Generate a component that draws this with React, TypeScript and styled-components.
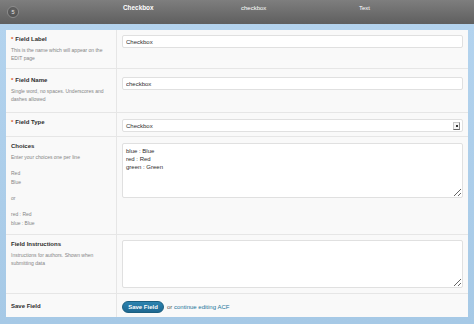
import React from "react";
import styled, { createGlobalStyle } from "styled-components";

const Global = createGlobalStyle`
  html, body { margin: 0; padding: 0; }
  body {
    width: 474px;
    height: 324px;
    overflow: hidden;
    font-family: "Liberation Sans", Arial, sans-serif;
    background: #a9cce8;
  }
  * { box-sizing: border-box; }
`;

const Page = styled.div`
  display: flex;
  flex-direction: column;
  width: 474px;
  height: 324px;
`;

const Header = styled.div`
  height: 24px;
  display: grid;
  grid-template-columns: 123px 118px 118px 1fr;
  align-items: start;
  background: linear-gradient(#7e7e7e, #686868 70%, #5f5f5f);
  color: #fff;
  font-size: 6.2px;
`;

const BadgeCell = styled.div`
  height: 24px;
  display: flex;
  align-items: center;
  padding-left: 7px;
`;

const Badge = styled.div`
  width: 12px;
  height: 12px;
  border-radius: 50%;
  background: radial-gradient(circle at 50% 40%, #6a6a6a, #474747);
  border: 1px solid #8c8c8c;
  color: #e6e6e6;
  font-size: 5.5px;
  display: flex;
  align-items: center;
  justify-content: center;
`;

const HeadText = styled.div<{ $bold?: boolean }>`
  padding-top: 4px;
  line-height: 8px;
  font-weight: ${(p) => (p.$bold ? 700 : 400)};
  font-size: ${(p) => (p.$bold ? "6.4px" : "6px")};
  color: #fff;
`;

const Frame = styled.div`
  flex: 1;
  padding: 6px 6px 7px 6px;
  background: linear-gradient(#b3d3ee, #a6c9e6);
`;

const Panel = styled.div`
  height: 100%;
  background: #f9f9f9;
  display: flex;
  flex-direction: column;
`;

const Row = styled.div<{ $h: number; $last?: boolean }>`
  display: grid;
  grid-template-columns: 111px 1fr;
  height: ${(p) => p.$h}px;
  border-bottom: ${(p) => (p.$last ? "none" : "1px solid #e6e6e6")};
  flex: ${(p) => (p.$last ? "1" : "none")};
`;

const LabelCell = styled.div<{ $pt: number }>`
  padding: ${(p) => p.$pt}px 4px 0 5px;
  border-right: 1px solid #e6e6e6;
`;

const FieldCell = styled.div<{ $pt: number }>`
  padding: ${(p) => p.$pt}px 5px 0 5px;
`;

const Label = styled.div`
  font-weight: 700;
  font-size: 6px;
  line-height: 8px;
  color: #2e2e2e;
`;

const Req = styled.span`
  color: #d54e21;
  margin-right: 2px;
`;

const Desc = styled.div`
  margin-top: 3px;
  font-size: 5px;
  line-height: 8.2px;
  color: #858585;
  white-space: pre-line;
`;

const TextInput = styled.input`
  display: block;
  width: 100%;
  height: 13px;
  padding: 0 3px;
  margin: 0;
  border: 1px solid #e0e0e0;
  border-radius: 2px;
  background: #fff;
  font-family: "Liberation Sans", Arial, sans-serif;
  font-size: 6px;
  color: #2e2e2e;
  outline: none;
`;

const SelectBox = styled.div`
  height: 13px;
  display: flex;
  align-items: center;
  justify-content: space-between;
  padding: 0 2px 0 3px;
  border: 1px solid #e0e0e0;
  border-radius: 2px;
  background: #fff;
  font-size: 6px;
  color: #2e2e2e;
`;

const SelectArrow = styled.div`
  width: 7px;
  height: 8px;
  border: 1px solid #c8c8c8;
  border-right-color: #888;
  border-bottom-color: #666;
  background: #f4f4f4;
  display: flex;
  align-items: center;
  justify-content: center;
  &::after {
    content: "";
    width: 2px;
    height: 2px;
    background: #333;
  }
`;

const Area = styled.textarea<{ $h: number }>`
  display: block;
  width: 100%;
  height: ${(p) => p.$h}px;
  margin: 0;
  padding: 3px 3px;
  border: 1px solid #e0e0e0;
  border-radius: 2px;
  background: #fff;
  font-family: "Liberation Sans", Arial, sans-serif;
  font-size: 6px;
  line-height: 8.2px;
  color: #2e2e2e;
  outline: none;
  resize: vertical;
`;

const SaveLine = styled.div`
  display: flex;
  align-items: center;
  gap: 3px;
  font-size: 6px;
  color: #555;
`;

const SaveButton = styled.button`
  width: 42px;
  height: 12px;
  padding: 0;
  border-radius: 6px;
  border: 1px solid #1b5f80;
  background: linear-gradient(#2c83b0, #1f6891);
  color: #fff;
  font-family: "Liberation Sans", Arial, sans-serif;
  font-weight: 700;
  font-size: 6px;
  display: flex;
  align-items: center;
  justify-content: center;
`;

const Link = styled.a`
  color: #21759b;
  text-decoration: none;
`;

export default function App() {
  return (
    <Page>
      <Global />
      <Header>
        <BadgeCell>
          <Badge>5</Badge>
        </BadgeCell>
        <HeadText $bold>Checkbox</HeadText>
        <HeadText>checkbox</HeadText>
        <HeadText>Text</HeadText>
      </Header>
      <Frame>
        <Panel>
          <Row $h={39}>
            <LabelCell $pt={5}>
              <Label>
                <Req>*</Req>Field Label
              </Label>
              <Desc>{"This is the name which will appear on the\nEDIT page"}</Desc>
            </LabelCell>
            <FieldCell $pt={5}>
              <TextInput defaultValue="Checkbox" />
            </FieldCell>
          </Row>
          <Row $h={44}>
            <LabelCell $pt={7}>
              <Label>
                <Req>*</Req>Field Name
              </Label>
              <Desc>{"Single word, no spaces. Underscores and\ndashes allowed"}</Desc>
            </LabelCell>
            <FieldCell $pt={8}>
              <TextInput defaultValue="checkbox" />
            </FieldCell>
          </Row>
          <Row $h={24}>
            <LabelCell $pt={5}>
              <Label>
                <Req>*</Req>Field Type
              </Label>
            </LabelCell>
            <FieldCell $pt={6}>
              <SelectBox>
                <span>Checkbox</span>
                <SelectArrow />
              </SelectBox>
            </FieldCell>
          </Row>
          <Row $h={98}>
            <LabelCell $pt={5}>
              <Label>Choices</Label>
              <Desc>
                {"Enter your choices one per line\n\nRed\nBlue\n\nor\n\nred : Red\nblue : Blue"}
              </Desc>
            </LabelCell>
            <FieldCell $pt={6}>
              <Area $h={55} defaultValue={"blue : Blue\nred : Red\ngreen : Green"} />
            </FieldCell>
          </Row>
          <Row $h={59}>
            <LabelCell $pt={5}>
              <Label>Field Instructions</Label>
              <Desc>{"Instructions for authors. Shown when\nsubmitting data"}</Desc>
            </LabelCell>
            <FieldCell $pt={5}>
              <Area $h={48} defaultValue="" />
            </FieldCell>
          </Row>
          <Row $h={24} $last>
            <LabelCell $pt={8}>
              <Label>Save Field</Label>
            </LabelCell>
            <FieldCell $pt={7}>
              <SaveLine>
                <SaveButton>Save Field</SaveButton>
                <span>
                  or <Link href="#">continue editing ACF</Link>
                </span>
              </SaveLine>
            </FieldCell>
          </Row>
        </Panel>
      </Frame>
    </Page>
  );
}
